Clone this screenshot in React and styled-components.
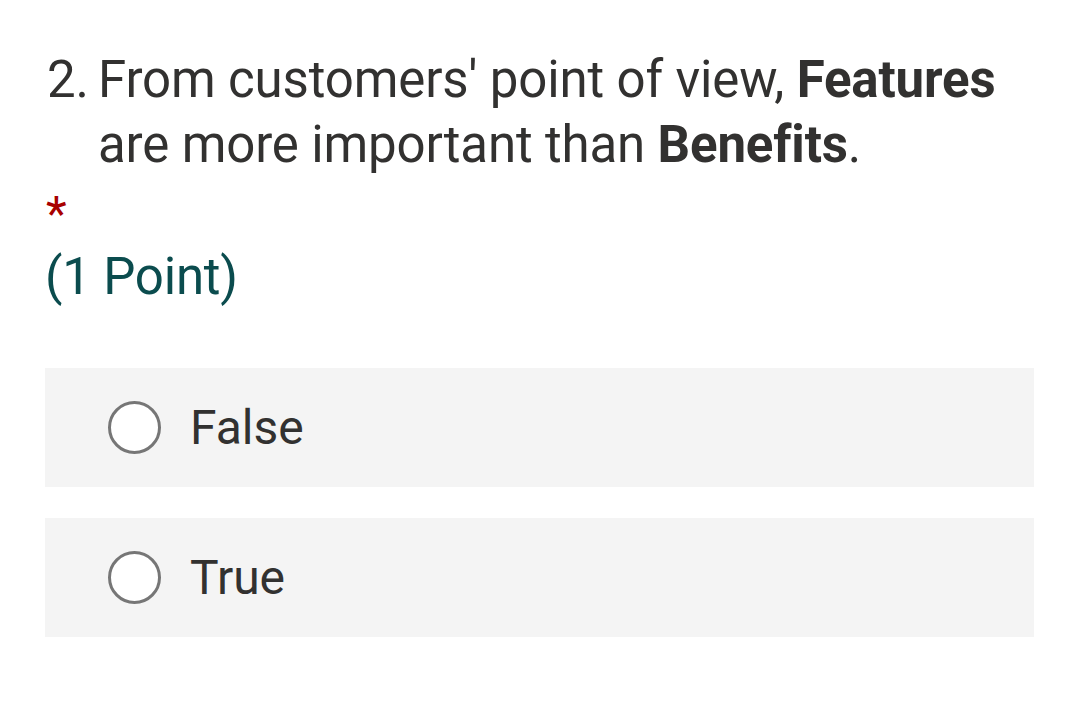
import styled, { createGlobalStyle } from "styled-components";

const GlobalStyle = createGlobalStyle`
  html, body {
    margin: 0;
    padding: 0;
    background: #ffffff;
  }
  body {
    font-family: Roboto, "Liberation Sans", sans-serif;
  }
`;

const Styled = {
  Page: styled.div`
    width: 1080px;
    height: 705px;
    padding: 47px 46px 0 45px;
    box-sizing: border-box;
    color: #323130;
  `,

  Title: styled.div`
    display: flex;
    font-size: 51px;
    line-height: 65px;
    letter-spacing: -0.15px;
  `,

  Number: styled.span`
    flex: 0 0 51px;
    padding-left: 2px;
  `,

  Question: styled.span`
    b {
      font-weight: 700;
    }
  `,

  Required: styled.div`
    color: #a80000;
    font-size: 48px;
    line-height: 48px;
    height: 40px;
    margin-top: 13px;
    padding-left: 1px;
  `,

  Points: styled.div`
    color: #0b4c4e;
    font-size: 51px;
    line-height: 60px;
    margin-top: 17px;
    letter-spacing: -0.2px;
  `,

  Options: styled.div`
    display: flex;
    flex-direction: column;
    gap: 31px;
    margin-top: 61px;
  `,

  Option: styled.label`
    display: flex;
    align-items: center;
    height: 119px;
    background: #f4f4f4;
    padding-left: 63px;
    box-sizing: border-box;
    font-size: 48px;
    cursor: pointer;
  `,

  Radio: styled.span`
    width: 53px;
    height: 53px;
    box-sizing: border-box;
    border: 3px solid #767676;
    border-radius: 50%;
    background: #ffffff;
    margin-right: 29px;
    flex: none;
  `,
};

const options = ["False", "True"];

function App() {
  return (
    <>
      <GlobalStyle />
      <Styled.Page>
        <Styled.Title>
          <Styled.Number>2.</Styled.Number>
          <Styled.Question>
            From customers' point of view, <b>Features</b> are more important
            than <b>Benefits</b>.
          </Styled.Question>
        </Styled.Title>
        <Styled.Required>*</Styled.Required>
        <Styled.Points>(1 Point)</Styled.Points>
        <Styled.Options>
          {options.map((opt) => (
            <Styled.Option key={opt}>
              <Styled.Radio />
              <span>{opt}</span>
            </Styled.Option>
          ))}
        </Styled.Options>
      </Styled.Page>
    </>
  );
}

export default App;
